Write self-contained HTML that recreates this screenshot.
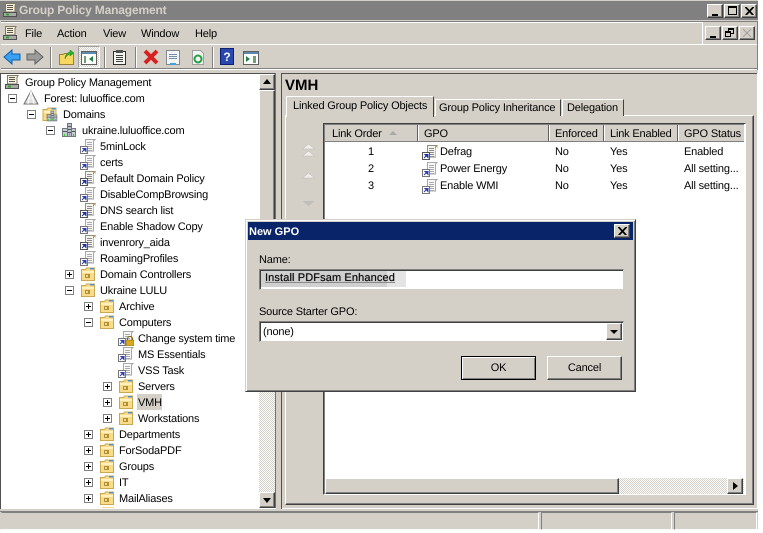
<!DOCTYPE html>
<html><head><meta charset="utf-8"><style>
html,body{margin:0;padding:0;background:#fff}
body{width:763px;height:533px;overflow:hidden;position:relative;font:11px/13px "Liberation Sans",sans-serif;color:#000}
div,span.t,svg.i{position:absolute}
.t{white-space:nowrap;display:block;margin-top:1px;letter-spacing:-.17px;text-rendering:geometricPrecision}
.r{background:#d4d0c8;box-sizing:border-box;border:1px solid;border-color:#fff #404040 #404040 #fff;box-shadow:inset -1px -1px 0 #808080}
.s{background:#d4d0c8;box-sizing:border-box;border:1px solid;border-color:#808080 #fff #fff #808080}
.d{background-color:#eee;background-image:repeating-conic-gradient(#d4d0c8 0 25%,#fff 0 50%);background-size:2px 2px}
.b{width:9px;height:9px;box-sizing:border-box;border:1px solid #808080;background:#fff}
.b:before{content:"";position:absolute;left:1px;top:3px;width:5px;height:1px;background:#000}
.p:after{content:"";position:absolute;left:3px;top:1px;width:1px;height:5px;background:#000}
.c{text-align:center}
.v{width:1px;height:21px;top:47px;background:#808080;box-shadow:1px 0 0 #fff}
</style></head><body>
<svg width="0" height="0" style="position:absolute">
<defs>
<symbol id="gpo" viewBox="0 0 16 16"><path d="M5.500 1.500h9.500l-1.500 1.500v10h-8z" fill="#f6f5ee" stroke="#8c8c88"/><path d="M7 4.500h5M7 6.500h5M7 8.500h5M7 10.500h5M7 12.500h5" stroke="#8a8a92"/><path d="M14 1.500l1.500 2" stroke="#c8a040"/><path d="M13.500 4v9" stroke="#d8c070"/><rect x="0.500" y="8.500" width="7" height="7" fill="#fff" stroke="#555"/><path d="M2 14l3-3M3 10.500h3v3z" stroke="#1c2fa0" fill="#1c2fa0"/></symbol>
<symbol id="gpop" viewBox="0 0 16 16"><path d="M5.500 1.500h9.500l-1.500 1.500v10h-8z" fill="#f8f8f6" stroke="#a8a8a6"/><path d="M7 4.500h5M7 6.500h5M7 8.500h5M7 10.500h5M7 12.500h5" stroke="#a8a8ae"/><rect x="0.500" y="8.500" width="7" height="7" fill="#fff" stroke="#777"/><path d="M2 14l3-3M3 10.500h3v3z" stroke="#2c3fa8" fill="#2c3fa8"/></symbol>
<symbol id="fold" viewBox="0 0 15 16"><path d="M0.500 3.500h4l1 -1.500h8v12.500h-13z" fill="#f8dc8c" stroke="#c8a850"/><path d="M1 5h12v2H1z" fill="#fff0c0"/><rect x="9" y="2" width="4" height="1.500" fill="#4a90d8"/><rect x="4" y="8" width="5" height="4" fill="#b09030"/><rect x="5" y="9" width="2" height="2" fill="#e8d890"/></symbol>
<symbol id="mg" viewBox="0 0 16 16"><path d="M3.500 1.500h10.500l-1 2v6.500H3.500z" fill="#f4f0e0" stroke="#807860"/><path d="M5 3.500h6M5 5.500h6M5 7.500h6" stroke="#605848"/><path d="M1.500 10.500h13v4h-13z" fill="#a8a8a8" stroke="#505050"/><path d="M4 12.500h3" stroke="#30a030" stroke-width="2"/></symbol>
<symbol id="srv" viewBox="0 0 16 16"><rect x="6.500" y="1.500" width="4" height="13" fill="#b8c0c8" stroke="#707880"/><rect x="1.500" y="6.500" width="5" height="8" fill="#c4ccd0" stroke="#707880"/><rect x="10.500" y="6.500" width="4" height="8" fill="#c4ccd0" stroke="#707880"/><path d="M7 4.500h3M7 7.500h3M7 10.500h3M2 9.500h4M11 9.500h3" stroke="#505860"/><path d="M3 13h1M12 13h1M8 12.500h1" stroke="#30d030" stroke-width="2"/></symbol>
</defs></svg>

<!-- title bar -->
<div style="left:0;top:0;width:758px;height:20px;background:#808080;border-top:1px solid #d4d0c8;box-sizing:border-box"></div>
<svg class="i" style="left:2px;top:2px" width="16" height="16"><use href="#mg"/></svg>
<span class="t" style="left:19px;top:2px;font-weight:bold;font-size:12px;line-height:14px;color:#d4d0c8">Group Policy Management</span>
<div class="r" style="left:707px;top:4px;width:16px;height:14px"><div style="left:4px;top:9px;width:6px;height:2px;background:#000"></div></div>
<div class="r" style="left:724px;top:4px;width:16px;height:14px"><div style="left:3px;top:1px;width:9px;height:9px;border:1px solid #000;border-top-width:2px;box-sizing:border-box"></div></div>
<div class="r" style="left:741px;top:4px;width:16px;height:14px"><svg class="i" style="left:3px;top:2px" width="9" height="8"><path d="M0 0l7.500 8M1 0l7.500 8M8 0L.5 8M9 0L1.500 8" stroke="#000"/></svg></div>

<!-- window bg -->
<div style="left:0;top:20px;width:758px;height:510px;background:#d4d0c8"></div>
<div style="left:1px;top:22px;width:701px;height:1px;background:#fff"></div>
<div style="left:1px;top:21px;width:756px;height:1px;background:#808080"></div>
<div style="left:1px;top:44px;width:756px;height:1px;background:#fff"></div>
<div style="left:702px;top:22px;width:1px;height:22px;background:#fff"></div>
<div style="left:1px;top:68px;width:756px;height:1px;background:#808080"></div>
<div style="left:1px;top:69px;width:756px;height:1px;background:#fff"></div>
<div style="left:757px;top:21px;width:1px;height:49px;background:#808080"></div>

<!-- menu -->
<svg class="i" style="left:2px;top:25px" width="16" height="16"><use href="#mg"/></svg>
<span class="t" style="left:25px;top:27px">File</span>
<span class="t" style="left:57px;top:27px">Action</span>
<span class="t" style="left:103px;top:27px">View</span>
<span class="t" style="left:141px;top:27px">Window</span>
<span class="t" style="left:195px;top:27px">Help</span>
<div class="r" style="left:705px;top:26px;width:16px;height:14px"><div style="left:4px;top:9px;width:6px;height:2px;background:#000"></div></div>
<div class="r" style="left:722px;top:26px;width:16px;height:14px"><div style="left:5px;top:1px;width:6px;height:6px;border:1px solid #000;border-top-width:2px;box-sizing:border-box"></div><div style="left:2px;top:4px;width:6px;height:6px;border:1px solid #000;border-top-width:2px;background:#d4d0c8;box-sizing:border-box"></div></div>
<div class="r" style="left:739px;top:26px;width:16px;height:14px"><svg class="i" style="left:3px;top:2px" width="9" height="8"><path d="M0 0l8 8M8 0L0 8" stroke="#a0a0a0"/></svg></div>

<!-- toolbar -->
<svg class="i" style="left:3px;top:48px" width="18" height="18"><path d="M1 9l8-7v4h8v6H9v4z" fill="#3aa0f0" stroke="#1060b0"/></svg>
<svg class="i" style="left:26px;top:48px" width="18" height="18"><path d="M17 9L9 2v4H1v6h8v4z" fill="#9c9c9c" stroke="#606060"/></svg>
<div class="v" style="left:50px"></div>
<svg class="i" style="left:58px;top:47px" width="18" height="19"><path d="M1.500 7.500h4l1-1h9v11h-14z" fill="#f8d860" stroke="#a08030"/><path d="M7 12c0-4 2-6 5-7V3l4 3-4 3V7c-2 1-4 2-5 5z" fill="#30b030" stroke="#208020" stroke-width=".5"/></svg>
<div class="d" style="left:78px;top:46px;width:22px;height:22px;box-sizing:border-box;border:1px solid;border-color:#a0a0a0 #fff #fff #a0a0a0"></div>
<svg class="i" style="left:81px;top:51px" width="16" height="14"><rect x=".5" y=".5" width="15" height="13" fill="#fff" stroke="#606060"/><rect x="1" y="1" width="14" height="2" fill="#5a8ab0"/><path d="M3 5h2v7H3z" fill="#70a070"/><path d="M12 5v6L8 8z" fill="#208040"/></svg>
<div class="v" style="left:104px"></div>
<svg class="i" style="left:112px;top:49px" width="15" height="17"><rect x="1.500" y="2.500" width="12" height="13" fill="#f4f4f0" stroke="#303030"/><rect x="4" y="1" width="7" height="3" fill="#505050"/><path d="M4 6.500h7M4 8.500h7M4 10.500h7M4 12.500h7" stroke="#404040"/></svg>
<div class="v" style="left:135px"></div>
<svg class="i" style="left:142px;top:48px" width="18" height="18"><path d="M3 3l12 12M15 3L3 15" stroke="#d82020" stroke-width="4"/></svg>
<svg class="i" style="left:165px;top:49px" width="17" height="17"><rect x="1.500" y="1.500" width="13" height="14" fill="#f4f4f4" stroke="#808890"/><path d="M4 5.500h8M4 7.500h8M4 9.500h8" stroke="#7090b0"/><rect x="5" y="14" width="6" height="2" fill="#40a0e0"/></svg>
<svg class="i" style="left:190px;top:49px" width="16" height="17"><path d="M2.500 1.500h8l3 3v11h-11z" fill="#f4f4f4" stroke="#a0a0a0"/><circle cx="8" cy="10" r="3.500" fill="none" stroke="#20a040" stroke-width="2"/></svg>
<div class="v" style="left:212px"></div>
<svg class="i" style="left:220px;top:48px" width="15" height="18"><rect x=".5" y=".5" width="13" height="16" fill="#2848b0" stroke="#102070"/><text x="7" y="13" text-anchor="middle" font-family="Liberation Sans" font-weight="bold" font-size="12" fill="#fff">?</text></svg>
<svg class="i" style="left:243px;top:51px" width="16" height="14"><rect x=".5" y=".5" width="15" height="13" fill="#fff" stroke="#606060"/><rect x="1" y="1" width="14" height="2" fill="#5a8ab0"/><path d="M3 5v6l4-3z" fill="#208040"/><path d="M10 5h3v7h-3z" fill="#70a070"/></svg>

<!-- tree pane -->
<div style="left:1px;top:74px;width:274px;height:434px;background:#fff"></div>
<div style="left:1px;top:73px;width:275px;height:1px;background:#505050"></div>
<div style="left:0;top:73px;width:1px;height:436px;background:#505050"></div>
<div style="left:275px;top:73px;width:1px;height:436px;background:#707070"></div>
<div style="left:1px;top:508px;width:275px;height:1px;background:#fff"></div>
<div class="d" style="left:259px;top:74px;width:16px;height:434px"></div>
<div class="r" style="left:259px;top:74px;width:16px;height:16px"><svg class="i" style="left:3px;top:4px" width="9" height="6"><path d="M4 0l4 5H0z"/></svg></div>
<div class="r" style="left:259px;top:90px;width:16px;height:230px"></div>
<div class="r" style="left:259px;top:492px;width:16px;height:16px"><svg class="i" style="left:3px;top:5px" width="9" height="6"><path d="M0 0h8L4 5z"/></svg></div>

<svg class="i" style="left:4px;top:74px" width="16" height="16"><use href="#mg"/></svg>
<span class="t" style="left:25px;top:76px">Group Policy Management</span>
<div class="b" style="left:8px;top:94px"></div>
<svg class="i" style="left:23px;top:90px" width="16" height="16"><path d="M8 1l7 13H1z" fill="#e0e0e0" stroke="#707070"/><path d="M8 1l-3 13M8 1l3 13M5 8h6" stroke="#fff"/></svg>
<span class="t" style="left:44px;top:92px">Forest: luluoffice.com</span>
<div class="b" style="left:27px;top:110px"></div>
<svg class="i" style="left:42px;top:106px" width="16" height="16"><use href="#fold"/></svg>
<svg class="i" style="left:46px;top:110px" width="12" height="12"><use href="#srv"/></svg>
<span class="t" style="left:63px;top:108px">Domains</span>
<div class="b" style="left:46px;top:126px"></div>
<svg class="i" style="left:61px;top:122px" width="16" height="16"><use href="#srv"/></svg>
<span class="t" style="left:82px;top:124px">ukraine.luluoffice.com</span>

<svg class="i" style="left:80px;top:138px" width="16" height="16"><use href="#gpop"/></svg><span class="t" style="left:100px;top:140px">5minLock</span>
<svg class="i" style="left:80px;top:154px" width="16" height="16"><use href="#gpop"/></svg><span class="t" style="left:100px;top:156px">certs</span>
<svg class="i" style="left:80px;top:170px" width="16" height="16"><use href="#gpo"/></svg><span class="t" style="left:100px;top:172px">Default Domain Policy</span>
<svg class="i" style="left:80px;top:186px" width="16" height="16"><use href="#gpop"/></svg><span class="t" style="left:100px;top:188px">DisableCompBrowsing</span>
<svg class="i" style="left:80px;top:202px" width="16" height="16"><use href="#gpo"/></svg><span class="t" style="left:100px;top:204px">DNS search list</span>
<svg class="i" style="left:80px;top:218px" width="16" height="16"><use href="#gpop"/></svg><span class="t" style="left:100px;top:220px">Enable Shadow Copy</span>
<svg class="i" style="left:80px;top:234px" width="16" height="16"><use href="#gpo"/></svg><span class="t" style="left:100px;top:236px">invenrory_aida</span>
<svg class="i" style="left:80px;top:250px" width="16" height="16"><use href="#gpop"/></svg><span class="t" style="left:100px;top:252px">RoamingProfiles</span>

<div class="b p" style="left:65px;top:270px"></div>
<svg class="i" style="left:81px;top:266px" width="15" height="16"><use href="#fold"/></svg><span class="t" style="left:100px;top:268px">Domain Controllers</span>
<div class="b" style="left:65px;top:286px"></div>
<svg class="i" style="left:81px;top:282px" width="15" height="16"><use href="#fold"/></svg><span class="t" style="left:100px;top:284px">Ukraine LULU</span>
<div class="b p" style="left:84px;top:302px"></div>
<svg class="i" style="left:100px;top:298px" width="15" height="16"><use href="#fold"/></svg><span class="t" style="left:119px;top:300px">Archive</span>
<div class="b" style="left:84px;top:318px"></div>
<svg class="i" style="left:100px;top:314px" width="15" height="16"><use href="#fold"/></svg><span class="t" style="left:119px;top:316px">Computers</span>

<svg class="i" style="left:118px;top:330px" width="16" height="16"><use href="#gpop"/></svg>
<svg class="i" style="left:126px;top:336px" width="8" height="10"><path d="M1.500 4V2.500a2.500 2 0 0 1 5 0V4" fill="none" stroke="#806010"/><rect y="4" width="8" height="6" fill="#d8a820" stroke="#806010" stroke-width=".5"/></svg>
<span class="t" style="left:138px;top:332px">Change system time</span>
<svg class="i" style="left:118px;top:346px" width="16" height="16"><use href="#gpop"/></svg><span class="t" style="left:138px;top:348px">MS Essentials</span>
<svg class="i" style="left:118px;top:362px" width="16" height="16"><use href="#gpop"/></svg><span class="t" style="left:138px;top:364px">VSS Task</span>

<div class="b p" style="left:103px;top:382px"></div>
<svg class="i" style="left:119px;top:378px" width="15" height="16"><use href="#fold"/></svg><span class="t" style="left:138px;top:380px">Servers</span>
<div class="b p" style="left:103px;top:398px"></div>
<svg class="i" style="left:119px;top:394px" width="15" height="16"><use href="#fold"/></svg>
<div style="left:137px;top:394px;width:25px;height:16px;background:#d4d0c8"></div><span class="t" style="left:138px;top:396px">VMH</span>
<div class="b p" style="left:103px;top:414px"></div>
<svg class="i" style="left:119px;top:410px" width="15" height="16"><use href="#fold"/></svg><span class="t" style="left:138px;top:412px">Workstations</span>
<div class="b p" style="left:84px;top:430px"></div>
<svg class="i" style="left:100px;top:426px" width="15" height="16"><use href="#fold"/></svg><span class="t" style="left:119px;top:428px">Departments</span>
<div class="b p" style="left:84px;top:446px"></div>
<svg class="i" style="left:100px;top:442px" width="15" height="16"><use href="#fold"/></svg><span class="t" style="left:119px;top:444px">ForSodaPDF</span>
<div class="b p" style="left:84px;top:462px"></div>
<svg class="i" style="left:100px;top:458px" width="15" height="16"><use href="#fold"/></svg><span class="t" style="left:119px;top:460px">Groups</span>
<div class="b p" style="left:84px;top:478px"></div>
<svg class="i" style="left:100px;top:474px" width="15" height="16"><use href="#fold"/></svg><span class="t" style="left:119px;top:476px">IT</span>
<div class="b p" style="left:84px;top:494px"></div>
<svg class="i" style="left:100px;top:490px" width="15" height="16"><use href="#fold"/></svg><span class="t" style="left:119px;top:492px">MailAliases</span>
<div style="left:102px;top:507px;width:12px;height:1px;background:#f0d890"></div>

<!-- right pane -->
<div style="left:281px;top:73px;width:476px;height:1px;background:#505050"></div>
<div style="left:281px;top:73px;width:1px;height:436px;background:#505050"></div>
<div style="left:757px;top:73px;width:1px;height:436px;background:#fff"></div>
<div style="left:282px;top:508px;width:476px;height:1px;background:#fff"></div>
<span class="t" style="left:285px;top:76px;font-weight:bold;font-size:15px;line-height:17px;letter-spacing:0">VMH</span>

<!-- tab page -->
<div style="left:285px;top:115px;width:469px;height:390px;box-sizing:border-box;border:1px solid;border-color:#fff #404040 #404040 #fff;box-shadow:inset -1px -1px 0 #808080"></div>
<div style="left:286px;top:96px;width:148px;height:21px;background:#d4d0c8;box-sizing:border-box;border:1px solid;border-color:#fff #404040 #d4d0c8 #fff;border-bottom:0"></div>
<span class="t" style="left:293px;top:99px">Linked Group Policy Objects</span>
<div style="left:435px;top:99px;width:126px;height:17px;background:#d4d0c8;box-sizing:border-box;border:1px solid;border-color:#fff #404040 #fff #fff;border-bottom:0"></div>
<span class="t" style="left:439px;top:101px">Group Policy Inheritance</span>
<div style="left:562px;top:99px;width:62px;height:17px;background:#d4d0c8;box-sizing:border-box;border:1px solid;border-color:#fff #404040 #fff #fff;border-bottom:0"></div>
<span class="t" style="left:567px;top:101px">Delegation</span>

<!-- side arrows -->
<svg class="i" style="left:301px;top:143px" width="15" height="70"><path d="M7.500 1l6 5h-12zM7.500 8l6 5h-12zM7.500 30l6 5h-12z" fill="#f0eeea" stroke="#b8b6b0" stroke-width=".5"/><path d="M1.500 58h12l-6 5z" fill="#c0beb8"/></svg>

<!-- list -->
<div style="left:323px;top:123px;width:423px;height:372px;background:#fff;box-sizing:border-box;border:1px solid;border-color:#404040 #fff #fff #404040"></div>
<div style="left:325px;top:125px;width:419px;height:17px;background:#d4d0c8"></div>
<div style="left:324px;top:124px;width:420px;height:1px;background:#808080"></div>
<div style="left:324px;top:124px;width:1px;height:370px;background:#808080"></div>
<div style="left:417px;top:125px;width:1px;height:17px;background:#606060;box-shadow:1px 0 0 #fff"></div>
<div style="left:548px;top:125px;width:1px;height:17px;background:#606060;box-shadow:1px 0 0 #fff"></div>
<div style="left:603px;top:125px;width:1px;height:17px;background:#606060;box-shadow:1px 0 0 #fff"></div>
<div style="left:677px;top:125px;width:1px;height:17px;background:#606060;box-shadow:1px 0 0 #fff"></div>
<div style="left:325px;top:141px;width:419px;height:1px;background:#808080"></div>
<span class="t" style="left:332px;top:127px">Link Order</span>
<svg class="i" style="left:389px;top:131px" width="9" height="5"><path d="M4 0l4 4H0z" fill="#a8a8a8"/></svg>
<span class="t" style="left:424px;top:127px">GPO</span>
<span class="t" style="left:555px;top:127px">Enforced</span>
<span class="t" style="left:610px;top:127px">Link Enabled</span>
<span class="t" style="left:684px;top:127px">GPO Status</span>

<span class="t" style="left:368px;top:145px">1</span><svg class="i" style="left:422px;top:144px" width="16" height="16"><use href="#gpo"/></svg><span class="t" style="left:440px;top:145px">Defrag</span><span class="t" style="left:555px;top:145px">No</span><span class="t" style="left:610px;top:145px">Yes</span><span class="t" style="left:684px;top:145px">Enabled</span>
<span class="t" style="left:368px;top:162px">2</span><svg class="i" style="left:422px;top:161px" width="16" height="16"><use href="#gpop"/></svg><span class="t" style="left:440px;top:162px">Power Energy</span><span class="t" style="left:555px;top:162px">No</span><span class="t" style="left:610px;top:162px">Yes</span><span class="t" style="left:684px;top:162px">All setting...</span>
<span class="t" style="left:368px;top:179px">3</span><svg class="i" style="left:422px;top:178px" width="16" height="16"><use href="#gpop"/></svg><span class="t" style="left:440px;top:179px">Enable WMI</span><span class="t" style="left:555px;top:179px">No</span><span class="t" style="left:610px;top:179px">Yes</span><span class="t" style="left:684px;top:179px">All setting...</span>

<!-- h scrollbar -->
<div class="d" style="left:325px;top:478px;width:419px;height:16px"></div>
<div class="r" style="left:325px;top:478px;width:294px;height:16px"></div>
<div class="r" style="left:727px;top:478px;width:16px;height:16px"><svg class="i" style="left:5px;top:3px" width="6" height="9"><path d="M0 0l5 4-5 4z"/></svg></div>

<!-- status bar -->
<div style="left:0;top:511px;width:758px;height:1px;background:#808080"></div>
<div style="left:0;top:529px;width:758px;height:1px;background:#fff"></div>
<div class="s" style="left:1px;top:512px;width:538px;height:18px;border-left-color:#d4d0c8"></div>
<div class="s" style="left:541px;top:512px;width:131px;height:18px"></div>
<div class="s" style="left:674px;top:512px;width:83px;height:18px"></div>

<!-- dialog -->
<div style="left:245px;top:219px;width:391px;height:173px;background:#d4d0c8;box-sizing:border-box;border:1px solid;border-color:#d4d0c8 #404040 #404040 #d4d0c8;box-shadow:inset 1px 1px 0 #fff,inset -1px -1px 0 #808080"></div>
<div style="left:248px;top:222px;width:385px;height:18px;background:#0a246a"></div>
<span class="t" style="left:249px;top:225px;color:#fff;font-weight:bold;font-size:11px;letter-spacing:0">New GPO</span>
<div class="r" style="left:614px;top:224px;width:16px;height:14px"><svg class="i" style="left:3px;top:2px" width="9" height="8"><path d="M0 0l7.500 8M1 0l7.500 8M8 0L.5 8M9 0L1.500 8" stroke="#000"/></svg></div>
<span class="t" style="left:259px;top:253px">Name:</span>
<div style="left:259px;top:269px;width:365px;height:21px;background:#fff;box-sizing:border-box;border:1px solid;border-color:#808080 #d4d0c8 #d4d0c8 #808080;box-shadow:inset 1px 1px 0 #404040"></div>
<div style="left:261px;top:271px;width:126px;height:16px;background:#d0d0d0"></div>
<div style="left:387px;top:271px;width:19px;height:16px;background:#e4e4e4"></div>
<span class="t" style="left:265px;top:271px;font-size:11px;line-height:13px;letter-spacing:.12px;text-shadow:0 0 .6px #000;text-decoration:underline;text-decoration-skip-ink:none;text-decoration-color:#888;color:#111">Install PDFsam Enhanced</span>
<span class="t" style="left:259px;top:305px">Source Starter GPO:</span>
<div style="left:259px;top:321px;width:365px;height:21px;background:#fff;box-sizing:border-box;border:1px solid;border-color:#808080 #d4d0c8 #d4d0c8 #808080;box-shadow:inset 1px 1px 0 #404040"></div>
<span class="t" style="left:263px;top:325px">(none)</span>
<div class="r" style="left:606px;top:323px;width:16px;height:17px"><svg class="i" style="left:3px;top:6px" width="9" height="5"><path d="M0 0h8L4 4z"/></svg></div>
<div class="r c" style="left:461px;top:356px;width:75px;height:24px;border:1px solid #000;box-shadow:inset 1px 1px 0 #fff,inset -1px -1px 0 #808080"><span class="t" style="left:0;width:73px;top:4px">OK</span></div>
<div class="r c" style="left:547px;top:356px;width:75px;height:24px"><span class="t" style="left:0;width:73px;top:4px">Cancel</span></div>
</body></html>
